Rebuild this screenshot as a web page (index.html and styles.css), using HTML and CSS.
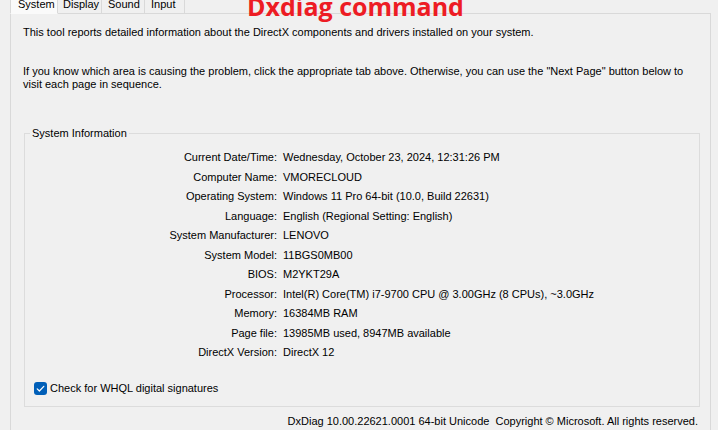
FILE: index.html
```html
<!DOCTYPE html>
<html lang="en">
<head>
  <meta charset="UTF-8" />
  <title>DirectX Diagnostic Tool</title>
  <link rel="stylesheet" href="styles.css">
</head>
<body>
  <div class="caption">Dxdiag command</div>

  <div class="tabs">
    <div class="tab active">System</div>
    <div class="tab">Display</div>
    <div class="tab">Sound</div>
    <div class="tab">Input</div>
    <div class="tab-fill"></div>
  </div>

  <div class="page">
    <p class="intro">This tool reports detailed information about the DirectX components and drivers installed on your system.</p>
    <p class="hint">If you know which area is causing the problem, click the appropriate tab above. Otherwise, you can use the "Next Page" button below to visit each page in sequence.</p>

    <fieldset class="group">
      <legend>System Information</legend>
      <div class="info">
        <span class="label">Current Date/Time:</span><span>Wednesday, October 23, 2024, 12:31:26 PM</span>
        <span class="label">Computer Name:</span><span>VMORECLOUD</span>
        <span class="label">Operating System:</span><span>Windows 11 Pro 64-bit (10.0, Build 22631)</span>
        <span class="label">Language:</span><span>English (Regional Setting: English)</span>
        <span class="label">System Manufacturer:</span><span>LENOVO</span>
        <span class="label">System Model:</span><span>11BGS0MB00</span>
        <span class="label">BIOS:</span><span>M2YKT29A</span>
        <span class="label">Processor:</span><span>Intel(R) Core(TM) i7-9700 CPU @ 3.00GHz (8 CPUs), ~3.0GHz</span>
        <span class="label">Memory:</span><span>16384MB RAM</span>
        <span class="label">Page file:</span><span>13985MB used, 8947MB available</span>
        <span class="label">DirectX Version:</span><span>DirectX 12</span>
      </div>
      <label class="check">
        <span class="box">
          <svg width="13" height="13" viewBox="0 0 13 13"><path d="M3.2 6.8 L5.4 9 L9.8 4.3" fill="none" stroke="#fff" stroke-width="1.2" stroke-linecap="round" stroke-linejoin="round"/></svg>
        </span>
        Check for WHQL digital signatures
      </label>
    </fieldset>

    <div class="footer">DxDiag 10.00.22621.0001 64-bit Unicode &nbsp;Copyright © Microsoft. All rights reserved.</div>
  </div>
</body>
</html>
```
FILE: styles.css
```css
html, body {
  height: 100%;
}

body {
  margin: 0;
  background-color: #f0f0f0;
  color: #000;
  font-family: "Liberation Sans", Arial, sans-serif;
  font-size: 11px;
  line-height: 13px;
  overflow: hidden;
  position: relative;
}

.caption {
  position: absolute;
  top: -6px;
  left: 0;
  right: 0;
  text-align: center;
  font-family: "Open Sans", sans-serif;
  font-weight: 700;
  font-size: 25px;
  line-height: 24px;
  color: #ed1c24;
  padding-right: 7px;
}

/* tab strip */
.tabs {
  display: flex;
  margin: 0 7px 0 10px;
  height: 14px;
}

.tab {
  box-sizing: border-box;
  height: 14px;
  padding: 0 0 6px 5px;
  line-height: 8px;
  border-right: 1px solid #d9d9d9;
  border-bottom: 1px solid #d9d9d9;
  white-space: nowrap;
}

.tab:nth-child(1) { width: 48px; padding-left: 7px; border-left: 1px solid #d9d9d9; }
.tab:nth-child(2) { width: 44px; }
.tab:nth-child(3) { width: 43px; padding-left: 6px; }
.tab:nth-child(4) { width: 40px; padding-left: 6px; }

.tab.active {
  background-color: #fafafa;
  border-bottom-color: #fafafa;
}

.tab-fill {
  flex: 1;
  border-bottom: 1px solid #d9d9d9;
  border-right: 1px solid #d9d9d9;
  margin-top: 13px;
}

/* tab page */
.page {
  margin: 0 7px 0 10px;
  border-left: 1px solid #d9d9d9;
  border-right: 1px solid #d9d9d9;
  padding: 12px 10px 0 12px;
  height: 100%;
  box-sizing: border-box;
}

.page p {
  margin: 0;
}

.hint {
  margin-top: 26px !important;
}

.group {
  margin: 36px 0 0 1px;
  padding: 8px 0 11px 0;
  border: 1px solid #dcdcdc;
}

.group legend {
  margin-left: 5px;
  padding: 0 2px;
}

.info {
  display: grid;
  grid-template-columns: 252px 1fr;
  column-gap: 6px;
  grid-auto-rows: 19.5px;
  line-height: 19.5px;
}

.label {
  text-align: right;
}

.check {
  display: flex;
  align-items: center;
  gap: 3px;
  margin: 19px 0 0 9px;
  height: 13px;
}

.box {
  width: 13px;
  height: 13px;
  border-radius: 3px;
  background-color: #005fb8;
  display: flex;
}

.footer {
  margin-top: 8px;
  text-align: right;
  padding-right: 2px;
}
```
